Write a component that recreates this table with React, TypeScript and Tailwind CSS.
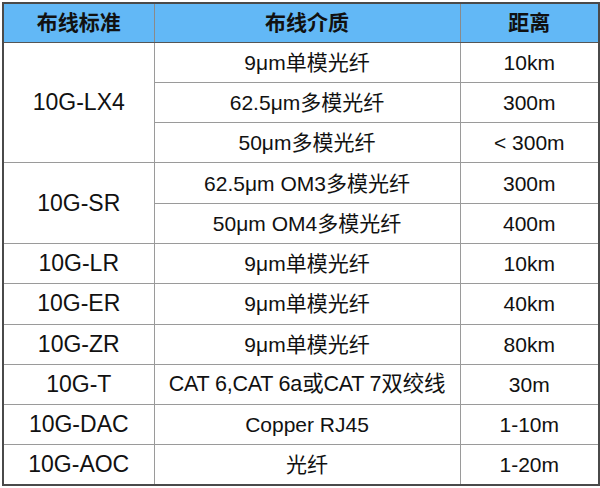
import React from "react";

type Row = { std?: string; span?: number; medium: string; dist: string };

const ROWS: Row[] = [
  { std: "10G-LX4", span: 3, medium: "9μm单模光纤", dist: "10km" },
  { medium: "62.5μm多模光纤", dist: "300m" },
  { medium: "50μm多模光纤", dist: "< 300m" },
  { std: "10G-SR", span: 2, medium: "62.5μm OM3多模光纤", dist: "300m" },
  { medium: "50μm OM4多模光纤", dist: "400m" },
  { std: "10G-LR", medium: "9μm单模光纤", dist: "10km" },
  { std: "10G-ER", medium: "9μm单模光纤", dist: "40km" },
  { std: "10G-ZR", medium: "9μm单模光纤", dist: "80km" },
  { std: "10G-T", medium: "CAT 6,CAT 6a或CAT 7双绞线", dist: "30m" },
  { std: "10G-DAC", medium: "Copper RJ45", dist: "1-10m" },
  { std: "10G-AOC", medium: "光纤", dist: "1-20m" },
];

const font = {
  fontFamily: '"Liberation Sans", "Noto Sans CJK SC", sans-serif',
};

export default function App() {
  return (
    <div className="w-[600px] h-[488px] bg-white pl-[2px] pt-[2px]" style={font}>
      <table className="w-[596px] border-collapse border-2 border-[#4a4a4a] text-[#111] table-fixed">
        <colgroup>
          <col className="w-[151px]" />
          <col className="w-[306px]" />
          <col className="w-[139px]" />
        </colgroup>
        <thead>
          <tr className="h-[39px] bg-[#62b8f6] text-[21px] font-bold">
            <th className="border border-[#8a8a8a] border-b-[#555]">布线标准</th>
            <th className="border border-[#8a8a8a] border-b-[#555]">布线介质</th>
            <th className="border border-[#8a8a8a] border-b-[#555]">距离</th>
          </tr>
        </thead>
        <tbody>
          {ROWS.map((r, i) => (
            <tr key={i} className="h-[40.3px]">
              {r.std && (
                <td rowSpan={r.span ?? 1} className="border border-[#9a9a9a] text-center text-[23px] leading-none">
                  {r.std}
                </td>
              )}
              <td className={`border border-[#9a9a9a] text-center leading-none ${r.std === "10G-T" ? "text-[21.5px] tracking-[-0.2px] whitespace-nowrap" : "text-[21px]"}`}>
                {r.medium}
              </td>
              <td className="border border-[#9a9a9a] text-center text-[21px] leading-none">{r.dist}</td>
            </tr>
          ))}
        </tbody>
      </table>
    </div>
  );
}
